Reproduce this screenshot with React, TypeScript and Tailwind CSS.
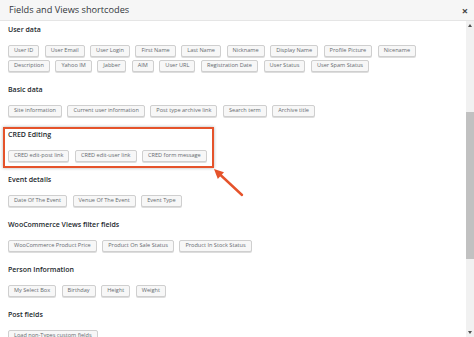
const SECTIONS: { title: string; items: string[] }[] = [
  {
    title: "User data",
    items: [
      "User ID",
      "User Email",
      "User Login",
      "First Name",
      "Last Name",
      "Nickname",
      "Display Name",
      "Profile Picture",
      "Nicename",
      "Description",
      "Yahoo IM",
      "Jabber",
      "AIM",
      "User URL",
      "Registration Date",
      "User Status",
      "User Spam Status",
    ],
  },
  {
    title: "Basic data",
    items: ["Site information", "Current user information", "Post type archive link", "Search term", "Archive title"],
  },
  {
    title: "CRED Editing",
    items: ["CRED edit-post link", "CRED edit-user link", "CRED form message"],
  },
  {
    title: "Event details",
    items: ["Date Of The Event", "Venue Of The Event", "Event Type"],
  },
  {
    title: "WooCommerce Views filter fields",
    items: ["WooCommerce Product Price", "Product On Sale Status", "Product In Stock Status"],
  },
  {
    title: "Person Information",
    items: ["My Select Box", "Birthday", "Height", "Weight"],
  },
  {
    title: "Post fields",
    items: ["Load non-Types custom fields"],
  },
];

function ShortcodeButton({ label }: { label: string }) {
  return (
    <button
      type="button"
      className="flex h-[12px] items-center rounded-[2px] border border-[#cfcfcf] bg-[#f7f7f7] px-[5px] text-[5.6px] leading-none whitespace-nowrap text-[#666b70] shadow-[0_1px_0_#dddddd]"
    >
      {label}
    </button>
  );
}

// 注釈（赤枠と矢印）は CRED Editing セクションの上に重ねる
function Callout() {
  return (
    <>
      <span className="pointer-events-none absolute -top-[3px] -left-[5px] h-[41px] w-[211px] border-2 border-[#e5532b] shadow-[0_0_3px_rgba(0,0,0,0.3)]" />
      <svg className="pointer-events-none absolute top-[30px] left-[197px]" width="45" height="40" viewBox="0 0 45 40">
        <line x1="37" y1="35" x2="15" y2="14.5" stroke="#e5532b" strokeWidth="2.4" strokeLinecap="round" />
        <polygon points="9,9 19,12.3 12.8,19" fill="#e5532b" />
      </svg>
    </>
  );
}

export default function App() {
  return (
    <div className="flex h-[337px] w-[474px] flex-col overflow-hidden bg-white font-['Open_Sans',sans-serif]">
      <header className="flex h-[21px] shrink-0 items-center justify-between border-b border-[#e5e5e5] bg-[#f6f6f6] pr-[6px] pl-[9px]">
        <h1 className="text-[9.2px] leading-none text-[#32373c]">Fields and Views shortcodes</h1>
        <span className="text-[11px] leading-none font-bold text-[#444]">×</span>
      </header>

      <div className="flex min-h-0 flex-1">
        <div className="min-w-0 flex-1 pt-[4px] pr-[24px] pl-[8px]">
          {SECTIONS.map((section) => (
            <section key={section.title} className="relative pb-[13px]">
              <h2 className="mb-[10px] h-[10px] text-[7px] leading-[10px] font-semibold text-[#23282d]">
                {section.title}
              </h2>
              <div className="flex flex-wrap gap-x-[5.5px] gap-y-[3px]">
                {section.items.map((item) => (
                  <ShortcodeButton key={item} label={item} />
                ))}
              </div>
              {section.title === "CRED Editing" && <Callout />}
            </section>
          ))}
        </div>

        {/* スクロールバー */}
        <div className="flex w-[8px] shrink-0 flex-col items-center bg-[#f1f1f1]">
          <span className="mt-[3px] h-0 w-0 border-x-[2.5px] border-b-[3px] border-x-transparent border-b-[#505050]" />
          <span className="mt-[85px] h-[147px] w-[8px] bg-[#c1c1c1]" />
          <span className="mt-auto mb-[3px] h-0 w-0 border-x-[2.5px] border-t-[3px] border-x-transparent border-t-[#505050]" />
        </div>
      </div>
    </div>
  );
}
